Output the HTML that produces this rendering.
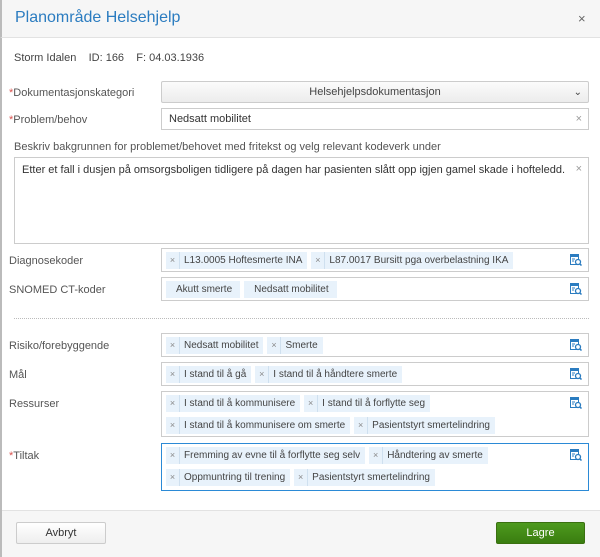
<!DOCTYPE html>
<html><head><meta charset="utf-8"><style>
*{box-sizing:border-box;margin:0;padding:0}
body{width:600px;height:557px;background:#fff;font-family:"Liberation Sans",sans-serif;font-size:11px;color:#444;position:relative;overflow:hidden}
.a{position:absolute}
.hdr{left:0;top:0;width:600px;height:38px;background:#f6f6f6;border-bottom:1px solid #e2e2e2;border-left:2px solid #bbb}
.title{left:15px;top:9px;font-size:16px;color:#2b7cc0}
.close{left:578px;top:11px;font-size:13px;color:#666}
.lbl{left:9px;font-size:11px;color:#555}
.req{color:#d9534f}
.box{left:161px;width:428px;border:1px solid #ccc;background:#fff}
.tag{display:inline-block;background:#e8f2fb;height:17px;line-height:17px;padding:0 5px 0 0;margin:3px 0 0 4px;font-size:10px;color:#444;vertical-align:top}
.tag i{font-style:normal;color:#888;font-size:9px;display:inline-block;width:14px;text-align:center;border-right:1px solid #cfe0ef;margin-right:4px}
.tag.n{padding-left:10px;padding-right:8px}
.ic{position:absolute;right:6px;top:5px}
.btn{height:22px;border:1px solid #ccc;border-radius:2px;text-align:center;line-height:20px;font-size:11px}
</style></head><body>
<div class="a" style="left:0;top:0;width:2px;height:557px;background:#bbb"></div>
<div class="a hdr"></div>
<div class="a title">Planområde Helsehjelp</div>
<div class="a close">×</div>
<div class="a" style="left:14px;top:52px">Storm Idalen &nbsp;&nbsp; ID: 166 &nbsp;&nbsp; F: 04.03.1936</div>

<div class="a lbl" style="top:87px"><span class="req">*</span>Dokumentasjonskategori</div>
<div class="a box" style="top:81px;height:22px;background:linear-gradient(#fbfbfb,#ececec);border-radius:2px;text-align:center;line-height:21px">Helsehjelpsdokumentasjon<span style="position:absolute;right:6px;top:0;font-size:10px">⌄</span></div>
<div class="a lbl" style="top:114px"><span class="req">*</span>Problem/behov</div>
<div class="a box" style="top:108px;height:22px;line-height:21px;padding-left:7px;color:#333">Nedsatt mobilitet<span style="position:absolute;right:6px;color:#999">×</span></div>

<div class="a" style="left:14px;top:141px;color:#555">Beskriv bakgrunnen for problemet/behovet med fritekst og velg relevant kodeverk under</div>
<div class="a" style="left:14px;top:157px;width:575px;height:87px;border:1px solid #ccc;padding:6px 7px;color:#333">Etter et fall i dusjen på omsorgsboligen tidligere på dagen har pasienten slått opp igjen gamel skade i hofteledd.<span style="position:absolute;right:6px;top:5px;color:#999">×</span></div>

<svg width="0" height="0" style="position:absolute"><defs><g id="s"><rect x="0.5" y="0.5" width="8" height="10" fill="none" stroke="#2b7cc0"/><rect x="0.5" y="0.5" width="8" height="2.5" fill="#2b7cc0"/><line x1="2" y1="5" x2="5" y2="5" stroke="#2b7cc0"/><line x1="2" y1="7" x2="4" y2="7" stroke="#2b7cc0"/><circle cx="8" cy="8" r="2.5" fill="#fff" stroke="#2b7cc0" stroke-width="1.3"/><line x1="9.8" y1="9.8" x2="11.5" y2="11.5" stroke="#2b7cc0" stroke-width="1.5"/></g></defs></svg>

<div class="a lbl" style="top:255px">Diagnosekoder</div>
<div class="a box" style="top:248px;height:24px"><span class="tag"><i>×</i>L13.0005 Hoftesmerte INA</span><span class="tag"><i>×</i>L87.0017 Bursitt pga overbelastning IKA</span><svg class="ic" width="12" height="12"><use href="#s"/></svg></div>
<div class="a lbl" style="top:284px">SNOMED CT-koder</div>
<div class="a box" style="top:277px;height:24px"><span class="tag n">Akutt smerte</span><span class="tag n">Nedsatt mobilitet</span><svg class="ic" width="12" height="12"><use href="#s"/></svg></div>

<div class="a" style="left:14px;top:318px;width:575px;border-top:1px dotted #bbb"></div>

<div class="a lbl" style="top:340px">Risiko/forebyggende</div>
<div class="a box" style="top:333px;height:24px"><span class="tag"><i>×</i>Nedsatt mobilitet</span><span class="tag"><i>×</i>Smerte</span><svg class="ic" width="12" height="12"><use href="#s"/></svg></div>
<div class="a lbl" style="top:369px">Mål</div>
<div class="a box" style="top:362px;height:24px"><span class="tag"><i>×</i>I stand til å gå</span><span class="tag"><i>×</i>I stand til å håndtere smerte</span><svg class="ic" width="12" height="12"><use href="#s"/></svg></div>
<div class="a lbl" style="top:398px">Ressurser</div>
<div class="a box" style="top:391px;height:46px;padding-bottom:3px"><div style="width:400px;line-height:0"><span class="tag"><i>×</i>I stand til å kommunisere</span><span class="tag"><i>×</i>I stand til å forflytte seg</span><br><span class="tag" style="margin-top:5px"><i>×</i>I stand til å kommunisere om smerte</span><span class="tag" style="margin-top:5px"><i>×</i>Pasientstyrt smertelindring</span></div><svg class="ic" width="12" height="12"><use href="#s"/></svg></div>
<div class="a lbl" style="top:450px"><span class="req">*</span>Tiltak</div>
<div class="a box" style="top:443px;height:48px;border-color:#2b8ad6"><div style="width:400px;line-height:0"><span class="tag"><i>×</i>Fremming av evne til å forflytte seg selv</span><span class="tag"><i>×</i>Håndtering av smerte</span><br><span class="tag" style="margin-top:5px"><i>×</i>Oppmuntring til trening</span><span class="tag" style="margin-top:5px"><i>×</i>Pasientstyrt smertelindring</span></div><svg class="ic" width="12" height="12"><use href="#s"/></svg></div>

<div class="a" style="left:2px;top:510px;width:598px;height:47px;background:#f6f6f6;border-top:1px solid #e2e2e2"></div>
<div class="a btn" style="left:16px;top:522px;width:90px;background:linear-gradient(#fff,#eee);color:#333;line-height:21px">Avbryt</div>
<div class="a btn" style="left:496px;top:522px;width:89px;background:linear-gradient(#4e9a1e,#3a7d10);border-color:#3a7010;color:#fff;line-height:21px">Lagre</div>
</body></html>
